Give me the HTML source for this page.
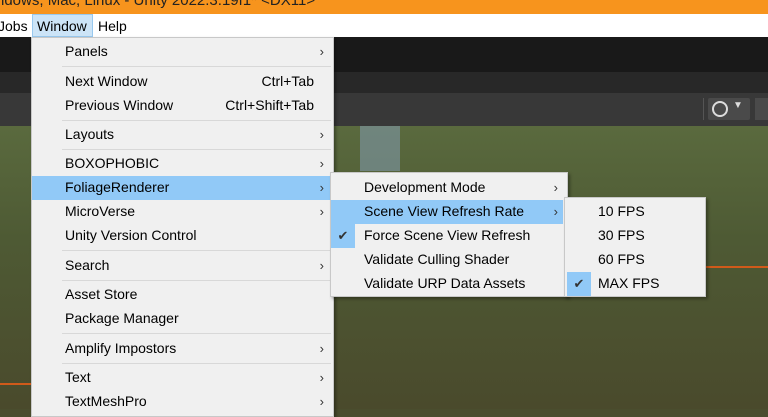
<!DOCTYPE html>
<html><head><style>
*{margin:0;padding:0;box-sizing:border-box}
body{width:768px;height:409px;overflow:hidden;position:relative;font-family:"Segoe UI","Liberation Sans",sans-serif;font-size:14px;color:#000;background:#4a4d2e}
.abs{position:absolute}
.menu{position:absolute;background:#f0f0f0;border:1px solid #c8c8c8;box-shadow:2px 2px 3px rgba(0,0,0,.35)}
.it{position:absolute;left:0;right:0;height:24px;line-height:23px}
.it .t{position:absolute;left:33px}
.it .s{position:absolute;right:19px}
.it .a{position:absolute;right:9px;font-size:13px;color:#333}
.hl{background:#91c9f7}
.sep{position:absolute;left:30px;right:2px;height:1px;background:#d8d8d8}
.chk{position:absolute;left:0;width:24px;height:24px;background:#91c9f7;text-align:center;line-height:24px;font-size:13px;color:#333}
</style></head><body>
<div class="abs" style="left:0;top:0;width:768px;height:14px;background:#f7941d;overflow:hidden"><div style="position:absolute;left:-4px;top:-8px;color:#222;font-size:15px;white-space:nowrap">ndows, Mac, Linux - Unity 2022.3.19f1* &lt;DX11&gt;</div></div>
<div class="abs" style="left:0;top:14px;width:768px;height:23px;background:#fff"></div>
<div class="abs" style="left:-2px;top:16px;line-height:20px">Jobs</div>
<div class="abs" style="left:32px;top:14px;width:61px;height:23px;background:#cce4f7;border:1px solid #99c9ef"></div>
<div class="abs" style="left:37px;top:16px;line-height:20px">Window</div>
<div class="abs" style="left:98px;top:16px;line-height:20px">Help</div>
<div class="abs" style="left:0;top:37px;width:768px;height:35px;background:#191919"></div>
<div class="abs" style="left:0;top:72px;width:768px;height:21px;background:#282828"></div>
<div class="abs" style="left:0;top:93px;width:768px;height:33px;background:#383838"></div>
<div class="abs" style="left:703px;top:98px;width:1px;height:22px;background:#555"></div>
<div class="abs" style="left:708px;top:98px;width:42px;height:22px;background:#4a4a4a;border-radius:2px"></div>
<div class="abs" style="left:712px;top:101px;width:16px;height:16px;border:2px solid #ddd;border-radius:50%"></div>
<div class="abs" style="left:733px;top:100px;color:#ddd;font-size:10px">▼</div>
<div class="abs" style="left:755px;top:98px;width:13px;height:22px;background:#4a4a4a"></div>
<div class="abs" style="left:0;top:126px;width:768px;height:283px;background:linear-gradient(180deg,#5a6a3e 0%,#4e5a34 40%,#4a4a2c 100%)"></div>
<div class="abs" style="left:360px;top:126px;width:40px;height:45px;background:#7f98a8;opacity:.6"></div>
<div class="abs" style="left:0;top:383px;width:40px;height:2px;background:#d05a1a"></div>
<div class="abs" style="left:700px;top:266px;width:68px;height:2px;background:#d05a1a"></div>

<div class="menu" style="left:31px;top:37px;width:303px;height:380px">
<div class="it" style="top:2px"><span class="t">Panels</span><span class="a">›</span></div>
<div class="sep" style="top:28px"></div>
<div class="it" style="top:32px"><span class="t">Next Window</span><span class="s">Ctrl+Tab</span></div>
<div class="it" style="top:56px"><span class="t">Previous Window</span><span class="s">Ctrl+Shift+Tab</span></div>
<div class="sep" style="top:82px"></div>
<div class="it" style="top:85px"><span class="t">Layouts</span><span class="a">›</span></div>
<div class="sep" style="top:111px"></div>
<div class="it" style="top:114px"><span class="t">BOXOPHOBIC</span><span class="a">›</span></div>
<div class="it hl" style="top:138px"><span class="t">FoliageRenderer</span><span class="a">›</span></div>
<div class="it" style="top:162px"><span class="t">MicroVerse</span><span class="a">›</span></div>
<div class="it" style="top:186px"><span class="t">Unity Version Control</span></div>
<div class="sep" style="top:212px"></div>
<div class="it" style="top:216px"><span class="t">Search</span><span class="a">›</span></div>
<div class="sep" style="top:242px"></div>
<div class="it" style="top:245px"><span class="t">Asset Store</span></div>
<div class="it" style="top:269px"><span class="t">Package Manager</span></div>
<div class="sep" style="top:295px"></div>
<div class="it" style="top:299px"><span class="t">Amplify Impostors</span><span class="a">›</span></div>
<div class="sep" style="top:325px"></div>
<div class="it" style="top:328px"><span class="t">Text</span><span class="a">›</span></div>
<div class="it" style="top:352px"><span class="t">TextMeshPro</span><span class="a">›</span></div>
</div>

<div class="menu" style="left:330px;top:172px;width:238px;height:125px">
<div class="it" style="top:3px"><span class="t">Development Mode</span><span class="a">›</span></div>
<div class="it hl" style="top:27px;right:4px"><span class="t">Scene View Refresh Rate</span><span class="a" style="right:5px">›</span></div>
<div class="it" style="top:51px"><span class="chk">✔</span><span class="t">Force Scene View Refresh</span></div>
<div class="it" style="top:75px"><span class="t">Validate Culling Shader</span></div>
<div class="it" style="top:99px"><span class="t">Validate URP Data Assets</span></div>
</div>

<div class="menu" style="left:564px;top:197px;width:142px;height:100px">
<div class="it" style="top:2px"><span class="t">10 FPS</span></div>
<div class="it" style="top:26px"><span class="t">30 FPS</span></div>
<div class="it" style="top:50px"><span class="t">60 FPS</span></div>
<div class="it" style="top:74px"><span class="chk" style="left:2px">✔</span><span class="t">MAX FPS</span></div>
</div>
</body></html>
